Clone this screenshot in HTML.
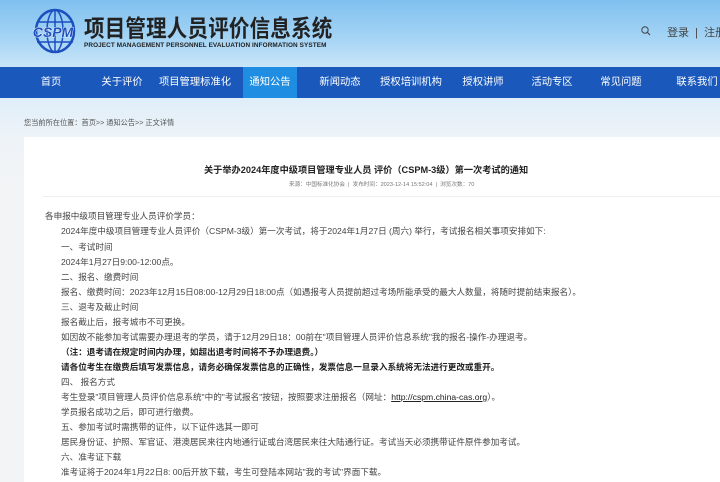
<!DOCTYPE html>
<html><head><meta charset="utf-8"><style>
*{margin:0;padding:0;box-sizing:border-box}
body{width:720px;height:482px;overflow:hidden;font-family:"Liberation Sans","Noto Sans CJK SC",sans-serif;background:#f2f3f5;position:relative}
.hdr{position:absolute;left:0;top:0;width:720px;height:67px;background:linear-gradient(180deg,#7fc0ef 0%,#a7d5f5 60%,#c9e5f8 100%)}
.nav{position:absolute;left:0;top:67px;width:720px;height:31px;background:#1a58bb}
.nav span{position:absolute;top:0;height:31px;line-height:31px;color:#fff;font-size:10.3px;transform:translateX(-50%);white-space:nowrap}
.act{position:absolute;left:243px;top:67px;width:54px;height:31px;background:#1f8ee2}
.sub{position:absolute;left:0;top:98px;width:720px;height:384px;background:linear-gradient(180deg,#dfeef9 0px,#eef3f7 40px,#f3f4f6 100px)}
.card{position:absolute;left:24px;top:137px;width:700px;height:345px;background:#fff}
.t{position:absolute;white-space:nowrap;color:#333}
.body div{position:absolute;white-space:nowrap;font-size:8.6px;color:#444;left:61px}
</style></head><body>
<div class="hdr"></div>
<svg style="position:absolute;left:26px;top:8px" width="54" height="48" viewBox="0 0 54 48">
<ellipse cx="29" cy="23" rx="19" ry="21" fill="none" stroke="#1d4fbf" stroke-width="2.5"/>
<ellipse cx="29" cy="23" rx="8" ry="21" fill="none" stroke="#1d4fbf" stroke-width="1.5"/>
<line x1="11" y1="14" x2="47" y2="14" stroke="#1d4fbf" stroke-width="1.5"/>
<line x1="11" y1="34" x2="47" y2="34" stroke="#1d4fbf" stroke-width="1.5"/>
<line x1="29" y1="2" x2="29" y2="44" stroke="#1d4fbf" stroke-width="1.5"/>
<text x="27" y="29" text-anchor="middle" font-family="Liberation Sans" font-weight="bold" font-style="italic" font-size="14" fill="#1d4fbf" stroke="#fff" stroke-width="0.8" paint-order="stroke">CSPM</text>
</svg>
<div class="t" style="left:84px;top:9px;font-size:20.5px;font-weight:bold;color:#222;letter-spacing:0.2px;transform:scaleY(1.15);transform-origin:top left">项目管理人员评价信息系统</div>
<div class="t" style="left:84px;top:42px;font-size:6.4px;font-weight:bold;color:#222;letter-spacing:0.1px">PROJECT MANAGEMENT PERSONNEL EVALUATION INFORMATION SYSTEM</div>
<svg style="position:absolute;left:641px;top:26px" width="10" height="10" viewBox="0 0 10 10"><circle cx="4" cy="4" r="3.2" fill="none" stroke="#444" stroke-width="1"/><line x1="6.3" y1="6.3" x2="9" y2="9" stroke="#444" stroke-width="1.1"/></svg>
<div class="t" style="left:667px;top:24px;font-size:11px;color:#444">登录 &nbsp;|&nbsp; 注册</div>
<div class="nav"></div><div class="act"></div>
<div class="nav" style="background:none">
<span style="left:51px">首页</span><span style="left:122px">关于评价</span><span style="left:195px">项目管理标准化</span><span style="left:270px">通知公告</span><span style="left:340px">新闻动态</span><span style="left:411px">授权培训机构</span><span style="left:483px">授权讲师</span><span style="left:552px">活动专区</span><span style="left:621px">常见问题</span><span style="left:697px">联系我们</span>
</div>
<div class="sub"></div>
<div class="t" style="left:24px;top:118px;font-size:7.2px;color:#555">您当前所在位置：首页&gt;&gt; 通知公告&gt;&gt; 正文详情</div>
<div class="card"></div>
<div class="t" style="left:204px;top:162px;font-size:9.2px;font-weight:bold;color:#222">关于举办2024年度中级项目管理专业人员 评价（CSPM-3级）第一次考试的通知</div>
<div class="t" style="left:289px;top:180px;font-size:5.6px;color:#777">来源：中国标准化协会 &nbsp;|&nbsp; 发布时间：2023-12-14 15:52:04 &nbsp;|&nbsp; 浏览次数：70</div>
<div style="position:absolute;left:43px;top:196px;width:677px;height:1px;background:#eee"></div>
<div class="body">
<div style="left:45px;top:210px">各申报中级项目管理专业人员评价学员：</div>
<div style="top:225px">2024年度中级项目管理专业人员评价（CSPM-3级）第一次考试，将于2024年1月27日 (周六) 举行，考试报名相关事项安排如下:</div>
<div style="top:241px">一、考试时间</div>
<div style="top:256px">2024年1月27日9:00-12:00点。</div>
<div style="top:271px">二、报名、缴费时间</div>
<div style="top:286px">报名、缴费时间：2023年12月15日08:00-12月29日18:00点（如遇报考人员提前超过考场所能承受的最大人数量，将随时提前结束报名）。</div>
<div style="top:301px">三、退考及截止时间</div>
<div style="top:316px">报名截止后，报考城市不可更换。</div>
<div style="top:331px">如因故不能参加考试需要办理退考的学员，请于12月29日18：00前在"项目管理人员评价信息系统"我的报名-操作-办理退考。</div>
<div style="top:346px;font-weight:bold;color:#222">（注：退考请在规定时间内办理，如超出退考时间将不予办理退费。）</div>
<div style="top:361px;font-weight:bold;color:#222">请各位考生在缴费后填写发票信息，请务必确保发票信息的正确性，发票信息一旦录入系统将无法进行更改或重开。</div>
<div style="top:376px">四、 报名方式</div>
<div style="top:391px">考生登录"项目管理人员评价信息系统"中的"考试报名"按钮，按照要求注册报名（网址：<u style="color:#222">http://cspm.china-cas.org</u>）。</div>
<div style="top:406px">学员报名成功之后，即可进行缴费。</div>
<div style="top:421px">五、参加考试时需携带的证件，以下证件选其一即可</div>
<div style="top:436px">居民身份证、护照、军官证、港澳居民来往内地通行证或台湾居民来往大陆通行证。考试当天必须携带证件原件参加考试。</div>
<div style="top:451px">六、准考证下载</div>
<div style="top:466px">准考证将于2024年1月22日8: 00后开放下载，考生可登陆本网站"我的考试"界面下载。</div>
</div>
</body></html>
